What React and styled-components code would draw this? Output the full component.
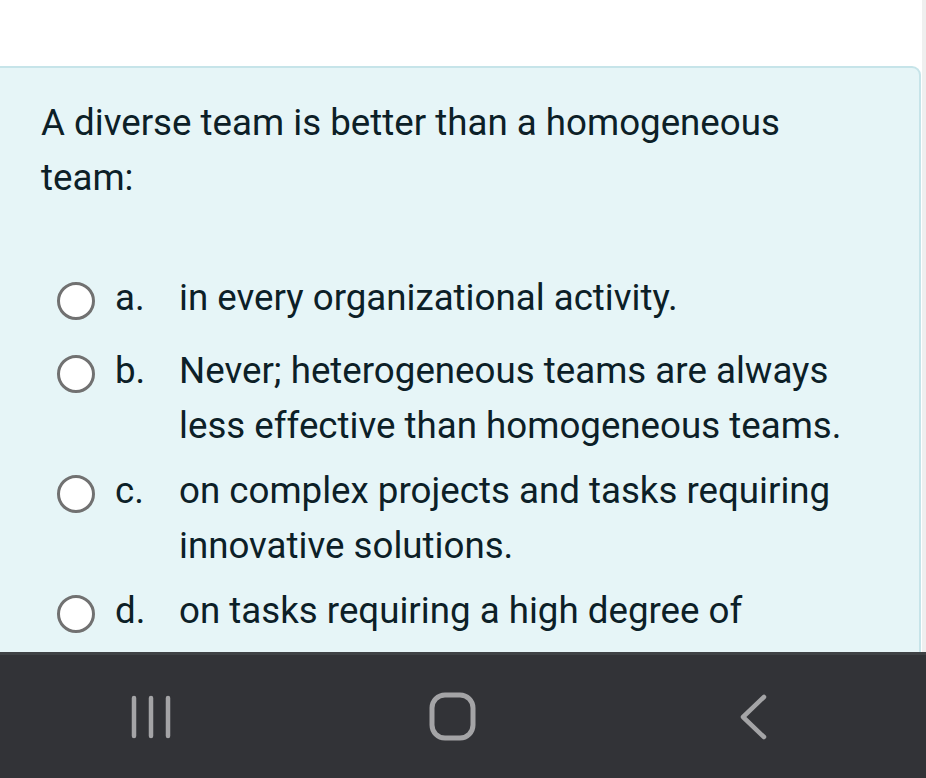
import React from 'react';
import styled, { createGlobalStyle } from 'styled-components';

const GlobalStyle = createGlobalStyle`
  html, body {
    margin: 0;
    padding: 0;
    background: #ffffff;
  }
  body {
    font-family: Roboto, "Noto Sans", "Liberation Sans", sans-serif;
  }
`;

const options = [
  { letter: 'a.', text: ['in every organizational activity.'], extra: 8 },
  { letter: 'b.', text: ['Never; heterogeneous teams are always', 'less effective than homogeneous teams.'] },
  { letter: 'c.', text: ['on complex projects and tasks requiring', 'innovative solutions.'] },
  { letter: 'd.', text: ['on tasks requiring a high degree of'] },
];

const App = () => {
  return (
    <Screen>
      <GlobalStyle />
      <Viewport>
        <Content>
          <QuestionCard>
            <QuestionText>A diverse team is better than a homogeneous<br />team:</QuestionText>
            <OptionList>
              {options.map((o) => (
                <Option key={o.letter} $extra={o.extra || 0}>
                  <Radio />
                  <Letter>{o.letter}</Letter>
                  <AnswerText>
                    {o.text.map((line, i) => (
                      <React.Fragment key={i}>{line}{i < o.text.length - 1 && <br />}</React.Fragment>
                    ))}
                  </AnswerText>
                </Option>
              ))}
            </OptionList>
          </QuestionCard>
        </Content>
        <ScrollTrack />
      </Viewport>
      <NavBar>
        <NavButton>
          <svg width="44" height="46" viewBox="0 0 44 46">
            <g stroke="#a4a4a6" strokeWidth="4.5" strokeLinecap="round">
              <line x1="5" y1="4" x2="5" y2="42" />
              <line x1="22" y1="4" x2="22" y2="42" />
              <line x1="39" y1="4" x2="39" y2="42" />
            </g>
          </svg>
        </NavButton>
        <NavButton>
          <svg width="48" height="50" viewBox="0 0 48 50">
            <rect x="3" y="3" width="41" height="43" rx="13" fill="none" stroke="#a4a4a6" strokeWidth="5" />
          </svg>
        </NavButton>
        <NavButton>
          <svg width="30" height="46" viewBox="0 0 30 46">
            <polyline points="24,3 3,23 24,43" fill="none" stroke="#a4a4a6" strokeWidth="4.5" strokeLinecap="round" strokeLinejoin="round" />
          </svg>
        </NavButton>
      </NavBar>
    </Screen>
  );
};

const Screen = styled.div`
  height: 778px;
  display: flex;
  flex-direction: column;
  overflow: hidden;
`;

const Viewport = styled.div`
  flex: 1;
  min-height: 0;
  display: flex;
  overflow: hidden;
`;

const Content = styled.div`
  flex: 1;
  padding-top: 66px;
`;

const ScrollTrack = styled.div`
  width: 4px;
  background: #efefef;
`;

const QuestionCard = styled.div`
  background: #e6f5f7;
  border: 2px solid #c6e4e9;
  border-left: none;
  border-top-right-radius: 9px;
  margin-right: 1px;
  padding: 27px 40px 60px 41px;
  color: #0c2027;
`;

const QuestionText = styled.div`
  font-size: 36.7px;
  line-height: 55px;
`;

const OptionList = styled.div`
  margin-top: 65px;
  padding-left: 16px;
  display: flex;
  flex-direction: column;
  gap: 10px;
`;

const Option = styled.div`
  display: flex;
  align-items: flex-start;
  font-size: 36.7px;
  line-height: 55px;
  margin-bottom: ${(p) => p.$extra}px;
`;

const Radio = styled.span`
  flex: none;
  width: 32px;
  height: 32px;
  margin-top: 12px;
  border: 3px solid #717171;
  border-radius: 50%;
  background: #ffffff;
  margin-right: 20px;
`;

const Letter = styled.span`
  flex: none;
  width: 64px;
`;

const AnswerText = styled.span`
  flex: 1;
`;

const NavBar = styled.div`
  flex: none;
  height: 123px;
  background: #323337;
  border-top: 3px solid #3f4245;
  display: grid;
  grid-template-columns: repeat(3, 302px);
  align-items: center;
`;

const NavButton = styled.div`
  display: flex;
  align-items: center;
  justify-content: center;
`;

export default App;
